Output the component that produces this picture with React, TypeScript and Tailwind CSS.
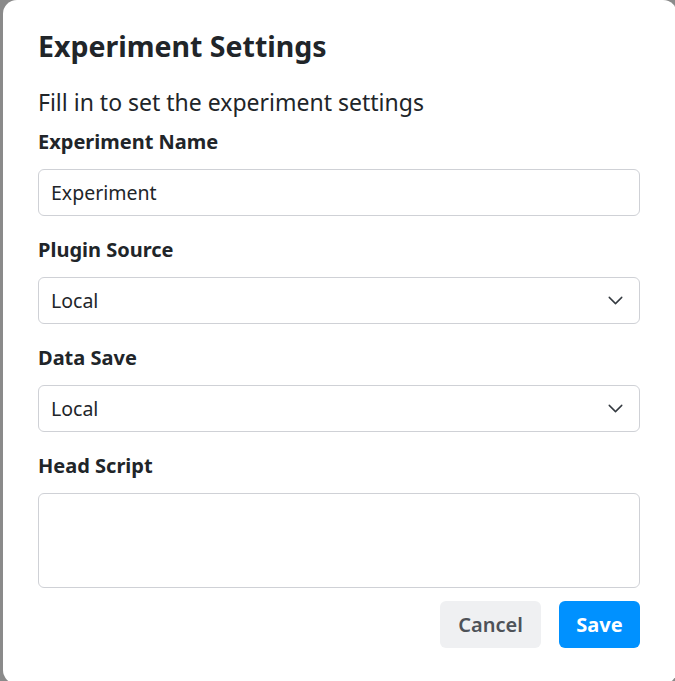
import { ChevronDown } from "lucide-react";

function Field({ label, first, children }: { label: string; first?: boolean; children: React.ReactNode }) {
  return (
    <div className={first ? "mt-[14px]" : "mt-[22px]"}>
      <label className="block text-[20px] font-bold leading-[24px] text-[#212529]">{label}</label>
      <div className="mt-[15px]">{children}</div>
    </div>
  );
}

function Select({ value }: { value: string }) {
  return (
    <div className="flex h-[47px] items-center justify-between rounded-[6px] border border-[#cfd1d6] bg-white pl-[12px] pr-[11px] text-[19.5px] text-[#212529]">
      <span>{value}</span>
      <ChevronDown className="h-[25px] w-[25px] text-[#343a40]" strokeWidth={1.4} />
    </div>
  );
}

export default function App() {
  return (
    <div className="h-[681px] w-[675px] overflow-hidden bg-[#8a8a8a] font-['Noto_Sans',sans-serif]">
      <div className="ml-[3px] h-[684px] w-[674px] rounded-[14px] bg-white pl-[35px] pr-[37px] pt-[26px]">
        <h2 className="text-[28.5px] font-bold leading-[40px] text-[#212529]">Experiment Settings</h2>
        <p className="mt-[22px] text-[23px] leading-[28px] text-[#212529]">Fill in to set the experiment settings</p>
        <Field label="Experiment Name" first>
          <div className="flex h-[47px] items-center rounded-[6px] border border-[#cfd1d6] bg-white px-[12px] text-[19.5px] text-[#212529]">
            Experiment
          </div>
        </Field>
        <Field label="Plugin Source">
          <Select value="Local" />
        </Field>
        <Field label="Data Save">
          <Select value="Local" />
        </Field>
        <Field label="Head Script">
          <div className="h-[95px] rounded-[6px] border border-[#cfd1d6] bg-white" />
        </Field>
        <div className="mt-[13px] flex justify-end gap-[18px]">
          <button className="h-[47px] w-[101px] rounded-[6px] bg-[#eff0f2] text-[20px] font-semibold text-[#4e5258]">
            Cancel
          </button>
          <button className="h-[47px] w-[81px] rounded-[6px] bg-[#0091ff] text-[20px] font-bold text-white">
            Save
          </button>
        </div>
      </div>
    </div>
  );
}
